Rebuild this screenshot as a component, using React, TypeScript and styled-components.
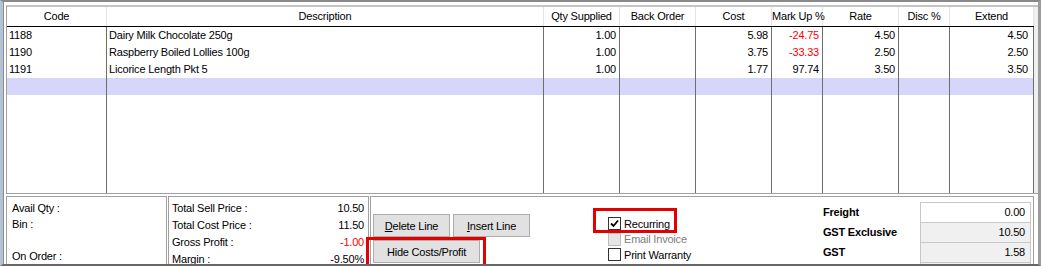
import React from "react";
import styled, { createGlobalStyle } from "styled-components";

const COLS = "100px 437px 76px 76px 76px 51px 76px 51px 84px";

const GlobalStyle = createGlobalStyle`
body {
  margin: 0;
  background: #ffffff;
  font-family: "Liberation Sans", Arial, sans-serif;
  font-size: 11px;
  letter-spacing: -0.2px;
  color: #000;
}
`;

const Window = styled.div`
position: relative;
width: 1041px;
height: 266px;
box-sizing: border-box;
overflow: hidden;
background: #fff;
border-left: 3px solid #b3c3d6;
border-top: 2px solid #8a8a8a;
border-right: 3px solid #9c9c9c;
border-bottom: 2px solid #686868;
`;

const Inner = styled.div`
height: 100%;
box-sizing: border-box;
border-left: 1px solid #8c8c8c;
padding: 3px 0 0 2px;
`;

const GridFrame = styled.div`
display: flex;
height: 189px;
box-sizing: border-box;
border-top: 2px solid #c4c4c4;
border-left: 1px solid #a0a0a0;
border-bottom: 1px solid #a0a0a0;
`;

const Table = styled.div`
width: 1027px;
display: flex;
flex-direction: column;
`;

const Gutter = styled.div`
width: 4px;
background: #efefef;
`;

const HeaderRow = styled.div`
display: grid;
grid-template-columns: ${COLS};
height: 20px;
box-sizing: border-box;
border-bottom: 1px solid #000;
`;

const HeaderCell = styled.div`
border-right: 1px solid #e3e3e3;
text-align: center;
line-height: 19px;
white-space: nowrap;
`;

const Body = styled.div`
flex: 1;
display: flex;
flex-direction: column;
`;

const Row = styled.div<{ $selected?: boolean }>`
display: grid;
grid-template-columns: ${COLS};
height: 17px;
background: ${p => (p.$selected ? "#d6d6fa" : "transparent")};
`;

const Filler = styled.div`
flex: 1;
display: grid;
grid-template-columns: ${COLS};
`;

const Cell = styled.div<{ $right?: boolean; $neg?: boolean; $pad?: number }>`
border-right: 1px solid #6e6e6e;
padding: 0 ${p => p.$pad ?? 3}px 0 2px;
text-align: ${p => (p.$right ? "right" : "left")};
color: ${p => (p.$neg ? "#ff0000" : "#000")};
line-height: 17px;
white-space: nowrap;
overflow: hidden;
`;

const BottomSection = styled.div`
display: flex;
gap: 1px;
height: 70px;
padding-top: 2px;
box-sizing: border-box;
overflow: hidden;
`;

const Panel = styled.div<{ $width: number }>`
width: ${p => p.$width}px;
height: 80px;
flex-shrink: 0;
box-sizing: border-box;
border: 1px solid #a0a0a0;
border-bottom: none;
`;

const InfoBox = styled(Panel)`
padding: 3px 5px;
line-height: 16px;
`;

const InfoLine = styled.div`
height: 16px;
`;

const PriceBox = styled(Panel)`
padding: 3px 4px 0 3px;
`;

const PriceLine = styled.div<{ $neg?: boolean }>`
display: flex;
justify-content: space-between;
line-height: 17px;
height: 17px;
& > span:last-child {
  color: ${p => (p.$neg ? "#ff0000" : "#000")};
}
`;

const ActionBox = styled(Panel)`
display: flex;
`;

const ButtonsCol = styled.div`
width: 237px;
padding: 17px 0 0 2px;
box-sizing: border-box;
display: flex;
flex-direction: column;
gap: 3px;
`;

const ButtonRow = styled.div`
display: flex;
gap: 3px;
`;

const Button = styled.button<{ $width: number }>`
width: ${p => p.$width}px;
height: 23px;
padding: 0;
background: #e1e1e1;
border: 1px solid #adadad;
font-family: inherit;
font-size: 11px;
letter-spacing: -0.2px;
color: #000;
& u {
  text-decoration: underline;
}
`;

const CheckCol = styled.div`
width: 215px;
padding-top: 19px;
box-sizing: border-box;
`;

const CheckRow = styled.div<{ $disabled?: boolean }>`
display: flex;
align-items: center;
gap: 3px;
height: 15.5px;
color: ${p => (p.$disabled ? "#7d7d7d" : "#000")};
`;

const Box = styled.span<{ $disabled?: boolean }>`
display: inline-flex;
align-items: center;
justify-content: center;
width: 13px;
height: 13px;
box-sizing: border-box;
border: 1px solid ${p => (p.$disabled ? "#bcbcbc" : "#333")};
background: ${p => (p.$disabled ? "#e6e6e6" : "#fff")};
`;

const TotalsCol = styled.div`
padding-top: 5px;
display: flex;
flex-direction: column;
`;

const TotalRow = styled.div`
display: flex;
height: 21px;
& + & {
  margin-top: -1px;
}
`;

const TotalLabel = styled.div`
width: 97px;
font-weight: bold;
line-height: 21px;
`;

const TotalValue = styled.div<{ $grey?: boolean }>`
width: 111px;
box-sizing: border-box;
border: 1px solid #c8c8c8;
background: ${p => (p.$grey ? "#f0f0f0" : "#fff")};
text-align: right;
padding-right: 5px;
line-height: 19px;
`;

const Highlight = styled.div<{ $x: number; $y: number; $w: number; $h: number }>`
position: absolute;
left: ${p => p.$x}px;
top: ${p => p.$y}px;
width: ${p => p.$w}px;
height: ${p => p.$h}px;
box-sizing: border-box;
border: 3px solid #e40000;
pointer-events: none;
`;

type Line = {
  code: string;
  desc: string;
  qty: string;
  back: string;
  cost: string;
  markup: string;
  rate: string;
  disc: string;
  extend: string;
};

const lines: Line[] = [
  { code: "1188", desc: "Dairy Milk Chocolate 250g", qty: "1.00", back: "", cost: "5.98", markup: "-24.75", rate: "4.50", disc: "", extend: "4.50" },
  { code: "1190", desc: "Raspberry Boiled Lollies 100g", qty: "1.00", back: "", cost: "3.75", markup: "-33.33", rate: "2.50", disc: "", extend: "2.50" },
  { code: "1191", desc: "Licorice Length Pkt 5", qty: "1.00", back: "", cost: "1.77", markup: "97.74", rate: "3.50", disc: "", extend: "3.50" },
];

const headers = ["Code", "Description", "Qty Supplied", "Back Order", "Cost", "Mark Up %", "Rate", "Disc %", "Extend"];

const Check = () => (
  <svg width="9" height="9" viewBox="0 0 9 9">
    <path d="M1 4.5 L3.5 7 L8 1.5" fill="none" stroke="#000" strokeWidth="1.8" />
  </svg>
);

export default function App() {
  return (
    <>
      <GlobalStyle />
      <Window>
        <Inner>
          <GridFrame>
            <Table>
              <HeaderRow>
                {headers.map(h => (
                  <HeaderCell key={h}>{h}</HeaderCell>
                ))}
              </HeaderRow>
              <Body>
                {lines.map(l => (
                  <Row key={l.code}>
                    <Cell>{l.code}</Cell>
                    <Cell>{l.desc}</Cell>
                    <Cell $right>{l.qty}</Cell>
                    <Cell $right>{l.back}</Cell>
                    <Cell $right>{l.cost}</Cell>
                    <Cell $right $neg={l.markup.startsWith("-")}>{l.markup}</Cell>
                    <Cell $right>{l.rate}</Cell>
                    <Cell $right>{l.disc}</Cell>
                    <Cell $right $pad={5}>{l.extend}</Cell>
                  </Row>
                ))}
                <Row $selected>
                  {headers.map(h => (
                    <Cell key={h} />
                  ))}
                </Row>
                <Filler>
                  {headers.map(h => (
                    <Cell key={h} />
                  ))}
                </Filler>
              </Body>
            </Table>
            <Gutter />
          </GridFrame>

          <BottomSection>
            <InfoBox $width={161}>
              <InfoLine>Avail Qty :</InfoLine>
              <InfoLine>Bin :</InfoLine>
              <InfoLine />
              <InfoLine>On Order :</InfoLine>
            </InfoBox>

            <PriceBox $width={201}>
              <PriceLine><span>Total Sell Price :</span><span>10.50</span></PriceLine>
              <PriceLine><span>Total Cost Price :</span><span>11.50</span></PriceLine>
              <PriceLine $neg><span>Gross Profit :</span><span>-1.00</span></PriceLine>
              <PriceLine><span>Margin :</span><span>-9.50%</span></PriceLine>
            </PriceBox>

            <ActionBox $width={664}>
              <ButtonsCol>
                <ButtonRow>
                  <Button $width={77}><u>D</u>elete Line</Button>
                  <Button $width={77}><u>I</u>nsert Line</Button>
                </ButtonRow>
                <ButtonRow>
                  <Button $width={107}>Hide Costs/Profit</Button>
                </ButtonRow>
              </ButtonsCol>

              <CheckCol>
                <CheckRow>
                  <Box><Check /></Box>
                  Recurring
                </CheckRow>
                <CheckRow $disabled>
                  <Box $disabled />
                  Email Invoice
                </CheckRow>
                <CheckRow>
                  <Box />
                  Print Warranty
                </CheckRow>
              </CheckCol>

              <TotalsCol>
                <TotalRow>
                  <TotalLabel>Freight</TotalLabel>
                  <TotalValue>0.00</TotalValue>
                </TotalRow>
                <TotalRow>
                  <TotalLabel>GST Exclusive</TotalLabel>
                  <TotalValue $grey>10.50</TotalValue>
                </TotalRow>
                <TotalRow>
                  <TotalLabel>GST</TotalLabel>
                  <TotalValue $grey>1.58</TotalValue>
                </TotalRow>
                <TotalRow>
                  <TotalLabel />
                  <TotalValue $grey />
                </TotalRow>
              </TotalsCol>
            </ActionBox>
          </BottomSection>
        </Inner>

        <Highlight $x={363} $y={235} $w={120} $h={40} />
        <Highlight $x={590} $y={206} $w={84} $h={25} />
      </Window>
    </>
  );
}
